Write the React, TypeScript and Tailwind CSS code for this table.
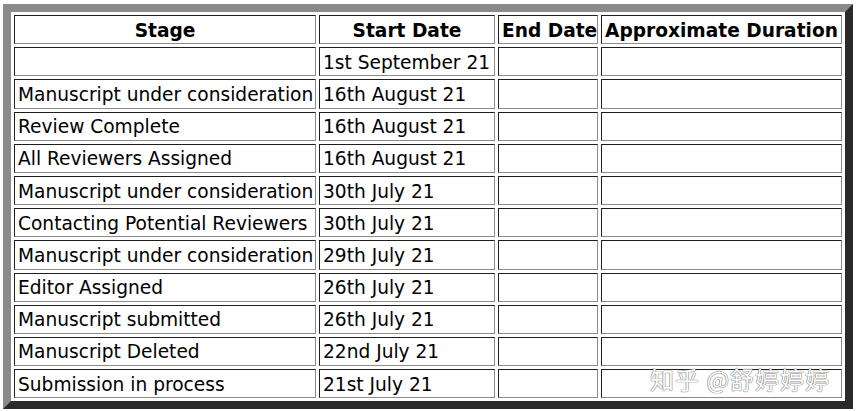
const ROWS: [string, string][] = [
  ["", "1st September 21"],
  ["Manuscript under consideration", "16th August 21"],
  ["Review Complete", "16th August 21"],
  ["All Reviewers Assigned", "16th August 21"],
  ["Manuscript under consideration", "30th July 21"],
  ["Contacting Potential Reviewers", "30th July 21"],
  ["Manuscript under consideration", "29th July 21"],
  ["Editor Assigned", "26th July 21"],
  ["Manuscript submitted", "26th July 21"],
  ["Manuscript Deleted", "22nd July 21"],
  ["Submission in process", "21st July 21"],
];

const cell =
  "h-[29.2px] border border-t-[#1e1e1e] border-l-[#1e1e1e] border-b-[#8c8c8c] border-r-[#8c8c8c] px-[3px] pt-[2px] pb-0 leading-[22px] whitespace-nowrap";

export default function App() {
  return (
    <div className="relative w-[858px] h-[411px] bg-white pl-[3px] pt-[4px] font-['DejaVu_Sans',Verdana,sans-serif] text-[18.6px] text-black">
      <table className="table-fixed border-separate [border-spacing:3px] border-[8px] border-t-[#8a8a8a] border-l-[#8a8a8a] border-b-[#2a2a2a] border-r-[#2a2a2a] bg-white w-[850px]">
        <thead>
          <tr>
            <th className={`${cell} w-[302px] text-center font-bold`}>Stage</th>
            <th className={`${cell} w-[176px] text-center font-bold`}>Start Date</th>
            <th className={`${cell} w-[100px] text-center font-bold`}>End Date</th>
            <th className={`${cell} w-[241px] text-center font-bold`}>Approximate Duration</th>
          </tr>
        </thead>
        <tbody>
          {ROWS.map(([stage, start], i) => (
            <tr key={i}>
              <td className={`${cell} text-left`}>{stage}</td>
              <td className={`${cell} text-left`}>{start}</td>
              <td className={cell}></td>
              <td className={cell}></td>
            </tr>
          ))}
        </tbody>
      </table>

      {/* watermark */}
      <div className="absolute left-[650px] top-[361px] text-[24px] tracking-[1px] text-white font-['Noto_Sans_CJK_SC',sans-serif] [text-shadow:0_0_1px_#555,0_0_1px_#555]">
        知乎 @舒婷婷婷
      </div>
    </div>
  );
}
